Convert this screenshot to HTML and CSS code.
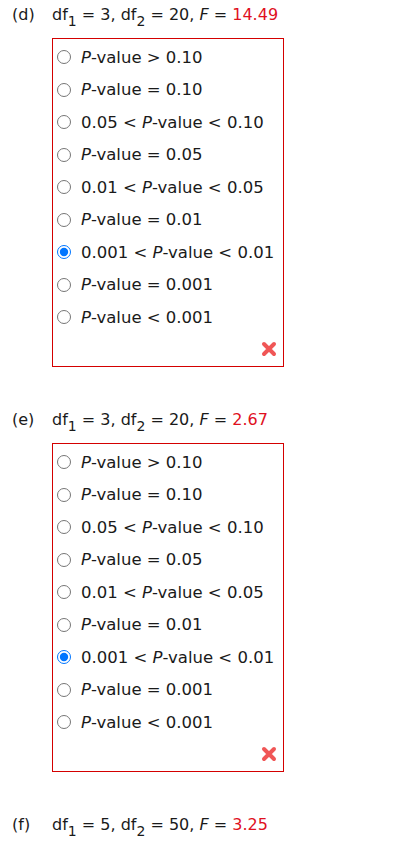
FILE: index.html
```html
<!DOCTYPE html>
<html lang="en">
<head>
    <meta charset="UTF-8">
    <meta name="viewport" content="width=device-width, initial-scale=1.0">
    <title>F test p-values</title>
    <link rel="stylesheet" href="styles.css">
</head>
<body>
    <div class="part">
        <div class="prompt"><span class="tag">(d)</span>df<sub>1</sub> = 3, df<sub>2</sub> = 20, <i>F</i> = <span class="val">14.49</span></div>
        <div class="answer">
            <label class="opt"><input type="radio" name="d"><span><i>P</i>-value &gt; 0.10</span></label>
            <label class="opt"><input type="radio" name="d"><span><i>P</i>-value = 0.10</span></label>
            <label class="opt"><input type="radio" name="d"><span>0.05 &lt; <i>P</i>-value &lt; 0.10</span></label>
            <label class="opt"><input type="radio" name="d"><span><i>P</i>-value = 0.05</span></label>
            <label class="opt"><input type="radio" name="d"><span>0.01 &lt; <i>P</i>-value &lt; 0.05</span></label>
            <label class="opt"><input type="radio" name="d"><span><i>P</i>-value = 0.01</span></label>
            <label class="opt"><input type="radio" name="d" checked><span>0.001 &lt; <i>P</i>-value &lt; 0.01</span></label>
            <label class="opt"><input type="radio" name="d"><span><i>P</i>-value = 0.001</span></label>
            <label class="opt"><input type="radio" name="d"><span><i>P</i>-value &lt; 0.001</span></label>
            <div class="mark">
                <svg width="16" height="16" viewBox="0 0 16 16"><path d="M3 3 L13 13 M13 3 L3 13" stroke="#f05656" stroke-width="4" stroke-linecap="round"/></svg>
            </div>
        </div>
    </div>
    <div class="part">
        <div class="prompt"><span class="tag">(e)</span>df<sub>1</sub> = 3, df<sub>2</sub> = 20, <i>F</i> = <span class="val">2.67</span></div>
        <div class="answer">
            <label class="opt"><input type="radio" name="e"><span><i>P</i>-value &gt; 0.10</span></label>
            <label class="opt"><input type="radio" name="e"><span><i>P</i>-value = 0.10</span></label>
            <label class="opt"><input type="radio" name="e"><span>0.05 &lt; <i>P</i>-value &lt; 0.10</span></label>
            <label class="opt"><input type="radio" name="e"><span><i>P</i>-value = 0.05</span></label>
            <label class="opt"><input type="radio" name="e"><span>0.01 &lt; <i>P</i>-value &lt; 0.05</span></label>
            <label class="opt"><input type="radio" name="e"><span><i>P</i>-value = 0.01</span></label>
            <label class="opt"><input type="radio" name="e" checked><span>0.001 &lt; <i>P</i>-value &lt; 0.01</span></label>
            <label class="opt"><input type="radio" name="e"><span><i>P</i>-value = 0.001</span></label>
            <label class="opt"><input type="radio" name="e"><span><i>P</i>-value &lt; 0.001</span></label>
            <div class="mark">
                <svg width="16" height="16" viewBox="0 0 16 16"><path d="M3 3 L13 13 M13 3 L3 13" stroke="#f05656" stroke-width="4" stroke-linecap="round"/></svg>
            </div>
        </div>
    </div>
    <div class="part">
        <div class="prompt"><span class="tag">(f)</span>df<sub>1</sub> = 5, df<sub>2</sub> = 50, <i>F</i> = <span class="val">3.25</span></div>
    </div>
</body>
</html>
```

FILE: styles.css
```css
*{
    margin: 0;
    padding: 0;
    box-sizing: border-box;
}
body{
    font-family: "DejaVu Sans", Verdana, sans-serif;
    font-size: 16px;
    color: #1a1a1a;
    background: #fff;
}
.part{
    padding: 5px 0 0 12px;
    margin-bottom: 38px;
}
.prompt{
    line-height: 20px;
    white-space: nowrap;
}
.tag{
    display: inline-block;
    width: 40px;
}
.prompt sub{
    font-size: 14px;
    line-height: 0;
    vertical-align: -6px;
}
.val{
    color: #e0101e;
}
.answer{
    width: 232px;
    height: 329px;
    margin: 13px 0 0 40px;
    border: 1px solid #d40000;
    padding: 2px 6px 0 4px;
}
.opt{
    display: flex;
    align-items: center;
    height: 32.5px;
    font-size: 16.5px;
    white-space: nowrap;
}
.opt input{
    width: 14px;
    height: 14px;
    margin: 0 10px 0 0;
    flex: none;
}
.mark{
    display: flex;
    justify-content: flex-end;
    margin-top: 7px;
    height: 16px;
}
.mark svg{
    display: block;
    filter: blur(0.3px);
}
```
